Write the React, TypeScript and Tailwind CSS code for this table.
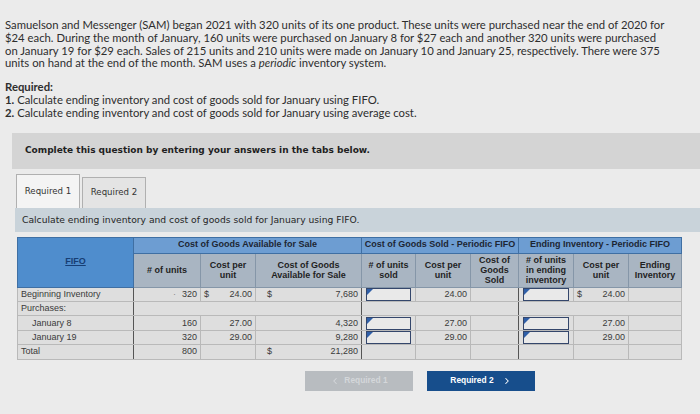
import { ChevronLeft, ChevronRight } from "lucide-react";

const sans = { fontFamily: "Lato, 'Open Sans', sans-serif" };
const verdana = { fontFamily: "'DejaVu Sans', Verdana, sans-serif" };
const arial = { fontFamily: "'Liberation Sans', Arial, sans-serif" };

type Row = {
  label: string;
  indent?: boolean;
  units?: string;
  cost?: string;
  costDollar?: boolean;
  total?: string;
  totalDollar?: boolean;
  sold?: boolean;
  soldCost?: string;
  yellow?: boolean;
  spacer?: boolean;
};

const rows: Row[] = [
  { label: "Beginning Inventory", units: "320", cost: "24.00", costDollar: true, total: "7,680", totalDollar: true, sold: true, soldCost: "24.00" },
  { label: "Purchases:", spacer: true },
  { label: "January 8", indent: true, units: "160", cost: "27.00", total: "4,320", sold: true, soldCost: "27.00" },
  { label: "January 19", indent: true, units: "320", cost: "29.00", total: "9,280", sold: true, soldCost: "29.00" },
  { label: "Total", units: "800", total: "21,280", totalDollar: true, yellow: true },
];

function InputBox() {
  return (
    <div className="relative mx-[1px] h-[13px] border border-[#34466b] bg-[#e9e9e9]">
      <span className="absolute left-0 top-0 h-0 w-0 border-l-[3px] border-t-[3px] border-l-[#2f5fa8] border-t-[#2f5fa8] border-r-[3px] border-b-[3px] border-r-transparent border-b-transparent" />
    </div>
  );
}

const cell = "border border-[#b9b9b9] bg-[#dedede] px-[3px] h-[14.4px] leading-none";

export default function App() {
  return (
    <div className="h-[414px] w-[700px] overflow-hidden bg-[#ebebeb] text-[#2e2e2e]">
      <div className="whitespace-nowrap px-[5px] pt-[19px] text-[11.3px] leading-[12.8px]" style={sans}>
        <p>
          Samuelson and Messenger (SAM) began 2021 with 320 units of its one product. These units were purchased near the end of 2020 for
          <br />
          $24 each. During the month of January, 160 units were purchased on January 8 for $27 each and another 320 units were purchased
          <br />
          on January 19 for $29 each. Sales of 215 units and 210 units were made on January 10 and January 25, respectively. There were 375
          <br />
          units on hand at the end of the month. SAM uses a <i>periodic</i> inventory system.
        </p>
        <p className="mt-[11px] font-bold">Required:</p>
        <p>
          <b>1.</b> Calculate ending inventory and cost of goods sold for January using FIFO.
        </p>
        <p>
          <b>2.</b> Calculate ending inventory and cost of goods sold for January using average cost.
        </p>
      </div>

      <div className="ml-[12px] mt-[13px] flex h-[36px] items-center bg-[#d4d4d4] pl-[13px]" style={verdana}>
        <span className="text-[9px] font-bold text-[#1f1f1f]">Complete this question by entering your answers in the tabs below.</span>
      </div>

      <div className="ml-[16px] mt-[5px] flex items-end gap-[2px] text-[8.6px] text-[#333]" style={verdana}>
        <div className="flex h-[34px] w-[64px] items-center justify-center border border-b-0 border-[#b0b0b0] bg-[#f4f4f4]">Required 1</div>
        <div className="flex h-[31px] w-[64px] items-center justify-center border border-b-0 border-[#b0b0b0] bg-[#e4e4e4]">Required 2</div>
      </div>
      <div className="ml-[15px] flex h-[24px] items-center bg-[#c9d3da] pl-[7px] text-[9.2px] text-[#262626]" style={verdana}>
        Calculate ending inventory and cost of goods sold for January using FIFO.
      </div>

      <div className="ml-[17px] mt-[5px]" style={arial}>
        <table className="w-[664px] table-fixed border-collapse text-[9px]">
          <colgroup>
            <col className="w-[116px]" />
            <col className="w-[67px]" />
            <col className="w-[55px]" />
            <col className="w-[106px]" />
            <col className="w-[54px]" />
            <col className="w-[55px]" />
            <col className="w-[48px]" />
            <col className="w-[55px]" />
            <col className="w-[55px]" />
            <col className="w-[53px]" />
          </colgroup>
          <thead>
            <tr className="h-[16px]">
              <th rowSpan={2} className="border border-[#3f6fa3] bg-[#4f8dcd] text-center font-bold">
                <span className="text-[#173e74] underline">FIFO</span>
              </th>
              <th colSpan={3} className="border border-[#3f6fa3] bg-[#6d9dd2] font-bold text-[#1d2633]">Cost of Goods Available for Sale</th>
              <th colSpan={3} className="border border-[#3f6fa3] bg-[#6d9dd2] font-bold text-[#1d2633]">Cost of Goods Sold - Periodic FIFO</th>
              <th colSpan={3} className="border border-[#3f6fa3] bg-[#6d9dd2] font-bold text-[#1d2633]">Ending Inventory - Periodic FIFO</th>
            </tr>
            <tr className="h-[34px] leading-[10px] font-bold text-[#1f1f1f]">
              <th className="border border-[#8596a8] bg-[#a9b5c2]"># of units</th>
              <th className="border border-[#8596a8] bg-[#a9b5c2]">Cost per<br />unit</th>
              <th className="border border-[#8596a8] bg-[#a9b5c2]">Cost of Goods<br />Available for Sale</th>
              <th className="border border-[#8596a8] bg-[#a9b5c2]"># of units<br />sold</th>
              <th className="border border-[#8596a8] bg-[#a9b5c2]">Cost per<br />unit</th>
              <th className="border border-[#8596a8] bg-[#a9b5c2]">Cost of<br />Goods<br />Sold</th>
              <th className="border border-[#8596a8] bg-[#a9b5c2]"># of units<br />in ending<br />inventory</th>
              <th className="border border-[#8596a8] bg-[#a9b5c2]">Cost per<br />unit</th>
              <th className="border border-[#8596a8] bg-[#a9b5c2]">Ending<br />Inventory</th>
            </tr>
          </thead>
          <tbody className="text-[#3a3a3a]">
            {rows.map((r) => (
              <tr key={r.label}>
                <td className={`${cell} ${r.indent ? "pl-[14px]" : ""} border-r-[#555]`}>{r.label}</td>
                {r.spacer ? (
                  <>
                    <td colSpan={3} className={`${cell} border-r-[#555]`} />
                    <td colSpan={3} className={`${cell} border-r-[#555]`} />
                    <td colSpan={3} className={cell} />
                  </>
                ) : (
                  <>
                    <td className={`${cell} text-right`}>
                      {r.label === "Beginning Inventory" && <span className="mr-[6px] text-[#888]">·</span>}
                      {r.units}
                    </td>
                    <td className={cell}>
                      <div className="flex justify-between">
                        <span>{r.costDollar ? "$" : ""}</span>
                        <span>{r.cost}</span>
                      </div>
                    </td>
                    <td className={`${cell} border-r-[#555]`}>
                      <div className="flex justify-between">
                        <span className="pl-[8px]">{r.totalDollar ? "$" : ""}</span>
                        <span>{r.total}</span>
                      </div>
                    </td>
                    <td className={`${cell} px-0`}>{r.sold && <InputBox />}</td>
                    <td className={`${cell} text-right`}>{r.soldCost}</td>
                    <td className={`${cell} border-r-[#555] ${r.yellow ? "bg-[#d5da86]" : ""}`} />
                    <td className={`${cell} px-0`}>{r.sold && <InputBox />}</td>
                    <td className={cell}>
                      <div className="flex justify-between">
                        <span>{r.costDollar ? "$" : ""}</span>
                        <span>{r.soldCost}</span>
                      </div>
                    </td>
                    <td className={`${cell} ${r.yellow ? "bg-[#d5da86]" : ""}`} />
                  </>
                )}
              </tr>
            ))}
          </tbody>
        </table>
      </div>

      <div className="mt-[11px] flex gap-[14px] pl-[305px]" style={arial}>
        <div className="flex h-[20px] w-[108px] items-center justify-center gap-[4px] bg-[#b8bcc0] text-[8.4px] font-bold text-[#d4d7da]">
          <ChevronLeft size={10} strokeWidth={2.5} />
          Required 1
        </div>
        <div className="flex h-[20px] w-[108px] items-center justify-center gap-[8px] bg-[#174e8c] text-[8.4px] font-bold text-white">
          Required 2
          <ChevronRight size={10} strokeWidth={2.5} />
        </div>
      </div>
    </div>
  );
}
